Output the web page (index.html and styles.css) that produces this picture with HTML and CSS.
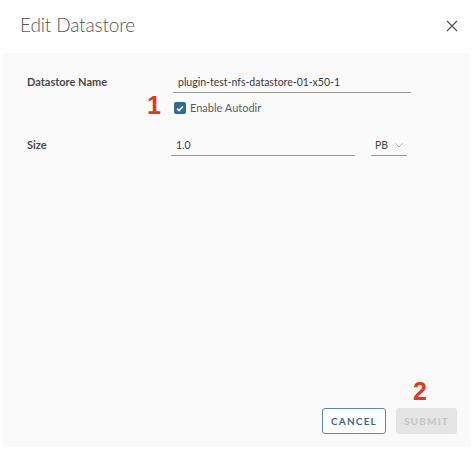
FILE: index.html
```html
<!DOCTYPE html>
<html>
<head>
<meta charset="utf-8">
<link rel="stylesheet" href="styles.css">
</head>
<body>
<div class="modal">
  <div class="modal-header">
    <h1 class="modal-title">Edit Datastore</h1>
    <button class="close" aria-label="Close">
      <svg width="12" height="12" viewBox="0 0 12 12"><path d="M1 1 L11 11 M11 1 L1 11" stroke="#5c5c5c" stroke-width="1.4" fill="none"/></svg>
    </button>
  </div>
  <div class="modal-body">
    <form class="form">
      <div class="row">
        <label class="label">Datastore Name</label>
        <div class="control">
          <div class="input name-input">plugin-test-nfs-datastore-01-x50-1</div>
          <div class="check">
            <span class="box">
              <svg width="8" height="7" viewBox="0 0 8 7"><path d="M1 3.6 L3 5.5 L7 1.2" stroke="#fff" stroke-width="1.6" fill="none"/></svg>
            </span>
            <span class="check-label">Enable Autodir</span>
          </div>
        </div>
      </div>
      <div class="row size-row">
        <label class="label">Size</label>
        <div class="control size-control">
          <div class="input size-input">1.0</div>
          <div class="select">
            <span>PB</span>
            <svg width="8" height="5" viewBox="0 0 8 5"><path d="M0.5 0.5 L4 4 L7.5 0.5" stroke="#b5b5b5" stroke-width="1" fill="none"/></svg>
          </div>
        </div>
      </div>
    </form>
    <div class="footer">
      <button class="btn btn-outline">CANCEL</button>
      <button class="btn btn-disabled">SUBMIT</button>
    </div>
    <span class="annot annot-1">1</span>
    <span class="annot annot-2">2</span>
  </div>
</div>
</body>
</html>
```
FILE: styles.css
```css
* { box-sizing: border-box; }
html, body { margin: 0; padding: 0; background: #fff; }
body { font-family: "Lato", "Open Sans", sans-serif; color: #565656; width: 474px; height: 452px; overflow: hidden; }

.modal { width: 474px; height: 452px; display: flex; flex-direction: column; }

.modal-header { height: 53px; display: flex; align-items: flex-start; justify-content: space-between; padding: 12px 16px 0 20px; }
.modal-title { margin: 0; font-size: 19px; font-weight: 300; color: #555; line-height: 26px; letter-spacing: -0.15px; }
.close { border: 0; background: none; padding: 0; margin-top: 8px; width: 12px; height: 12px; display: block; }
.close svg { display: block; }

.modal-body { position: relative; flex: 1; margin: 0 4px 5px 3px; background: #fafafa; display: flex; flex-direction: column; padding: 0 13px 13px 24px; }

.form { display: flex; flex-direction: column; padding-top: 19px; }
.row { display: grid; grid-template-columns: 144px 1fr; }
.label { font-size: 11px; font-weight: 700; color: #4a4a4a; line-height: 14px; padding-top: 3px; }
.control { display: flex; flex-direction: column; }

.input { font-size: 10.5px; color: #3a3a3a; line-height: 14px; padding: 3px 0 3px 5px; border-bottom: 1px solid #9a9a9a; }
.name-input { width: 238px; margin-left: 2px; }

.check { display: flex; align-items: center; gap: 4px; margin-top: 8px; margin-left: 3px; }
.box { width: 12px; height: 12px; border-radius: 2px; background: #2e6b99; display: flex; align-items: center; justify-content: center; }
.box svg { display: block; }
.check-label { font-size: 11px; color: #5e5e5e; line-height: 14px; }

.size-row { margin-top: 20px; }
.size-control { flex-direction: row; gap: 16px; }
.size-input { width: 184px; }
.select { width: 36px; display: flex; align-items: center; gap: 7px; padding: 3px 0 3px 4px; border-bottom: 1px solid #9a9a9a; font-size: 10.5px; color: #4a4a4a; line-height: 14px; }
.select svg { display: block; }

.footer { margin-top: auto; display: flex; justify-content: flex-end; gap: 10px; }
.btn { height: 26px; border-radius: 3px; font-family: "Lato", sans-serif; font-size: 10px; font-weight: 700; letter-spacing: 1.2px; padding: 0; display: flex; align-items: center; justify-content: center; }
.btn-outline { width: 64px; border: 1px solid #5b89ab; background: #fff; color: #3f6887; }
.btn-disabled { width: 61px; border: 0; background: #e5e5e5; color: #c4c4c4; }

.annot { position: absolute; font-family: "Liberation Sans", sans-serif; font-weight: 700; color: #de3a21; font-size: 25px; line-height: 1; }
.annot-1 { left: 144px; top: 40px; }
.annot-2 { left: 410px; top: 326px; }
```
